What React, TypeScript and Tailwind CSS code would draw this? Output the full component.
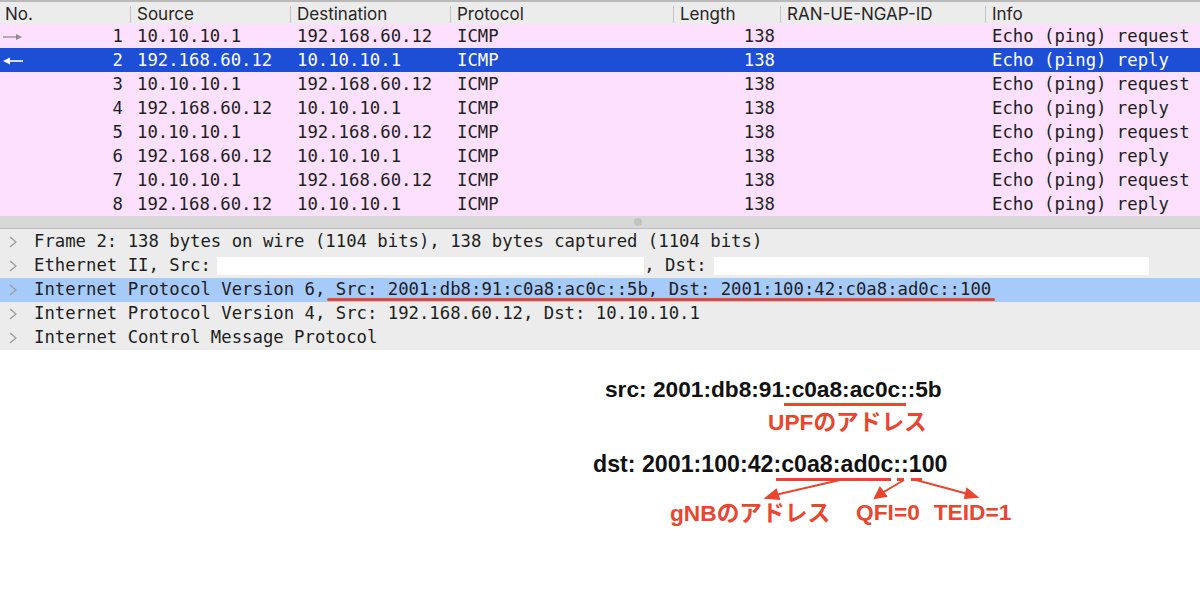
const mono = "font-['DejaVu_Sans_Mono','Liberation_Mono',monospace] text-[17.3px]";
const red = "#e8462e";

const cols = "grid grid-cols-[130px_160px_160px_223px_107px_205px_1fr]";

const packets = [
  { no: 1, src: "10.10.10.1", dst: "192.168.60.12", info: "Echo (ping) request" },
  { no: 2, src: "192.168.60.12", dst: "10.10.10.1", info: "Echo (ping) reply" },
  { no: 3, src: "10.10.10.1", dst: "192.168.60.12", info: "Echo (ping) request" },
  { no: 4, src: "192.168.60.12", dst: "10.10.10.1", info: "Echo (ping) reply" },
  { no: 5, src: "10.10.10.1", dst: "192.168.60.12", info: "Echo (ping) request" },
  { no: 6, src: "192.168.60.12", dst: "10.10.10.1", info: "Echo (ping) reply" },
  { no: 7, src: "10.10.10.1", dst: "192.168.60.12", info: "Echo (ping) request" },
  { no: 8, src: "192.168.60.12", dst: "10.10.10.1", info: "Echo (ping) reply" },
];

const Arrow = ({ dir, white }: { dir: "right" | "left"; white?: boolean }) => (
  <svg width="22" height="10" viewBox="0 0 22 10" className="shrink-0">
    {dir === "right" ? (
      <>
        <line x1="1" y1="5" x2="18" y2="5" stroke="#8e8e8e" strokeWidth="1.3" />
        <path d="M14 2 L20 5 L14 8 Z" fill="#8e8e8e" />
      </>
    ) : (
      <>
        <line x1="4" y1="5" x2="21" y2="5" stroke={white ? "#fff" : "#8e8e8e"} strokeWidth="1.6" />
        <path d="M8 1.5 L1 5 L8 8.5 Z" fill={white ? "#fff" : "#8e8e8e"} />
      </>
    )}
  </svg>
);

const Chevron = () => (
  <svg width="10" height="14" viewBox="0 0 10 14" className="shrink-0">
    <polyline points="2,2 8,7 2,12" fill="none" stroke="#9a9a9a" strokeWidth="1.2" />
  </svg>
);

const HeaderCell = ({ label, first }: { label: string; first?: boolean }) => (
  <div className="flex items-center h-full">
    {!first && <div className="w-px h-[17px] bg-[#c4c4c4]" />}
    <span className={first ? "pl-[5px]" : "pl-[6px]"}>{label}</span>
  </div>
);

const PacketList = () => (
  <div>
    <div className={`${cols} h-[24px] pb-[3px] bg-[#ececec] border-t-2 border-[#b9b9b9] font-['Inter','Liberation_Sans',sans-serif] text-[17px] text-[#262626]`}>
      <HeaderCell label="No." first />
      <HeaderCell label="Source" />
      <HeaderCell label="Destination" />
      <HeaderCell label="Protocol" />
      <HeaderCell label="Length" />
      <HeaderCell label="RAN-UE-NGAP-ID" />
      <HeaderCell label="Info" />
    </div>
    {packets.map((p) => {
      const sel = p.no === 2;
      return (
        <div
          key={p.no}
          className={`${cols} h-[24px] items-center ${mono} ${sel ? "bg-[#1d4ed6] text-white" : "bg-[#fce0fd] text-[#1e1e1e]"}`}
        >
          <div className="flex items-center justify-between pl-[2px] pr-[7px]">
            {p.no === 1 ? <Arrow dir="right" /> : p.no === 2 ? <Arrow dir="left" white /> : <span />}
            <span>{p.no}</span>
          </div>
          <div className="pl-[7px]">{p.src}</div>
          <div className="pl-[7px]">{p.dst}</div>
          <div className="pl-[7px]">ICMP</div>
          <div className="text-right pr-[5px]">138</div>
          <div />
          <div className="pl-[7px] whitespace-nowrap">{p.info}</div>
        </div>
      );
    })}
  </div>
);

const Splitter = () => (
  <div className="h-[13px] bg-[#d7d7d7] border-b border-[#bcbcbc] flex items-center justify-center">
    <div className="w-[8px] h-[8px] rounded-full bg-[#c3c3c3] ml-[76px]" />
  </div>
);

const DetailRow = ({ children, active }: { children: React.ReactNode; active?: boolean }) => (
  <div className={`h-[24px] flex items-center pl-[8px] gap-[16px] ${active ? "bg-[#a6cbfb]" : ""}`}>
    <Chevron />
    <div className="flex items-center whitespace-pre">{children}</div>
  </div>
);

const Details = () => (
  <div className={`bg-[#ececec] h-[121px] pt-[1px] ${mono} text-[#1e1e1e]`}>
    <DetailRow>Frame 2: 138 bytes on wire (1104 bits), 138 bytes captured (1104 bits)</DetailRow>
    <DetailRow>
      <span>{"Ethernet II, Src: "}</span>
      <span className="inline-block w-[427px] h-[18px] -ml-[4px] bg-white" />
      <span>{", Dst: "}</span>
      <span className="inline-block w-[435px] h-[18px] -ml-[3px] bg-white" />
    </DetailRow>
    <DetailRow active>
      <span>Internet Protocol Version 6,</span>
      <span className="relative">
        {" Src: 2001:db8:91:c0a8:ac0c::5b, Dst: 2001:100:42:c0a8:ad0c::100"}
        <span className="absolute left-[2px] -right-[4px] bottom-[2px] h-[2.5px] rounded-full bg-[#e8462e]" />
      </span>
    </DetailRow>
    <DetailRow>Internet Protocol Version 4, Src: 192.168.60.12, Dst: 10.10.10.1</DetailRow>
    <DetailRow>Internet Control Message Protocol</DetailRow>
  </div>
);

const Mark = ({ children, r = 0, l = 0 }: { children: React.ReactNode; r?: number; l?: number }) => (
  <span className="relative">
    {children}
    <span
      className="absolute -bottom-[4px] h-[3px] bg-[#e8462e]"
      style={{ left: l, right: r }}
    />
  </span>
);

const Annotations = () => (
  <div className="relative flex-1 font-['Liberation_Sans','Noto_Sans_CJK_JP',sans-serif] font-bold text-[22.7px] leading-[24px]">
    <div className="pt-[27px] pl-[605px] text-[#111]">
      src: 2001:db8:91<Mark r={2}>:c0a8:ac0c:</Mark>:5b
    </div>
    <div className="mt-[8px] pl-[768px] text-[#e8462e]">
      UPF<span className="font-['Noto_Sans_CJK_JP',sans-serif]">のアドレス</span>
    </div>
    <div className="mt-[18px] pl-[593px] text-[#111] text-[23.2px]">
      dst: 2001:100:42<Mark l={3} r={2}>:c0a8:ad0c</Mark>
      <Mark l={4} r={-3}>:</Mark>:<Mark l={2} r={0}>1</Mark>00
    </div>
    <div className="mt-[24px] flex text-[#e8462e] whitespace-nowrap">
      <span className="pl-[670px]">
        gNB<span className="font-['Noto_Sans_CJK_JP',sans-serif]">のアドレス</span>
      </span>
      <span className="pl-[26px]">QFI=0</span>
      <span className="pl-[14px]">TEID=1</span>
    </div>
    <svg className="absolute left-0 top-0" width="1200" height="247" viewBox="0 350 1200 247">
      <g stroke={red} strokeWidth="2" fill={red}>
        <line x1="840" y1="480" x2="775" y2="495" />
        <path d="M766 498 L776 490 L779 499 Z" />
        <line x1="904" y1="480" x2="882" y2="493" />
        <path d="M875 498 L880 488 L886 496 Z" />
        <line x1="916" y1="480" x2="968" y2="494" />
        <path d="M977 497 L967 489 L965 498 Z" />
      </g>
    </svg>
  </div>
);

export default function App() {
  return (
    <div className="w-[1200px] h-[597px] bg-white overflow-hidden flex flex-col">
      <PacketList />
      <Splitter />
      <Details />
      <Annotations />
    </div>
  );
}
